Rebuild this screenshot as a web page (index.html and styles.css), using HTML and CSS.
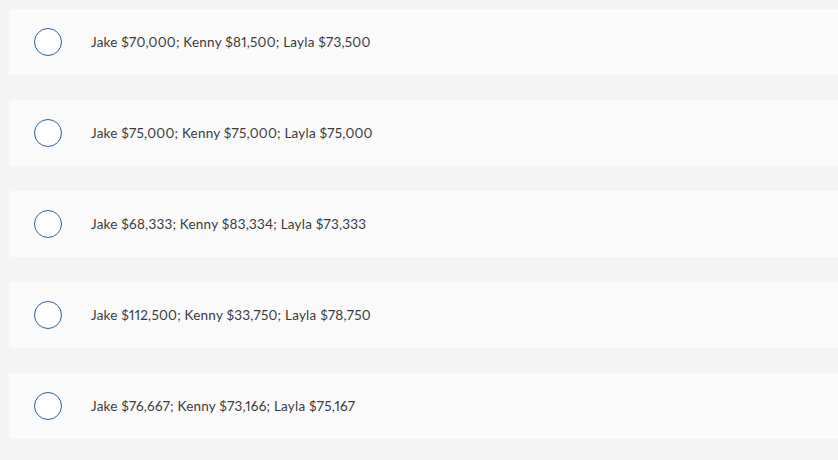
FILE: index.html
```html
<!DOCTYPE html>
<html>
<head>
<meta charset="utf-8">
<link rel="stylesheet" href="styles.css">
</head>
<body>
<div class="options">
  <label class="option"><span class="radio"></span><span class="text">Jake $70,000; Kenny $81,500; Layla $73,500</span></label>
  <label class="option"><span class="radio"></span><span class="text">Jake $75,000; Kenny $75,000; Layla $75,000</span></label>
  <label class="option"><span class="radio"></span><span class="text">Jake $68,333; Kenny $83,334; Layla $73,333</span></label>
  <label class="option"><span class="radio"></span><span class="text">Jake $112,500; Kenny $33,750; Layla $78,750</span></label>
  <label class="option"><span class="radio"></span><span class="text">Jake $76,667; Kenny $73,166; Layla $75,167</span></label>
</div>
</body>
</html>
```
FILE: styles.css
```css
html, body {
  margin: 0;
  padding: 0;
  background: #f4f4f4;
  overflow: hidden;
}
body {
  padding: 9px 0 0 9px;
  font-family: "Lato", "Liberation Sans", sans-serif;
}
.options {
  display: flex;
  flex-direction: column;
  gap: 25px;
  margin-right: -10px;
}
.option {
  display: flex;
  align-items: center;
  height: 66px;
  background: #fafafa;
  border-radius: 3px;
  padding-left: 25px;
  box-sizing: border-box;
}
.radio {
  width: 28px;
  height: 28px;
  box-sizing: border-box;
  border: 1.5px solid #2d5f95;
  border-radius: 50%;
  background: #fff;
  flex: none;
}
.text {
  margin-left: 29px;
  font-size: 13.5px;
  letter-spacing: 0.22px;
  font-variant-numeric: proportional-nums;
  color: #3a3a3a;
}
```
